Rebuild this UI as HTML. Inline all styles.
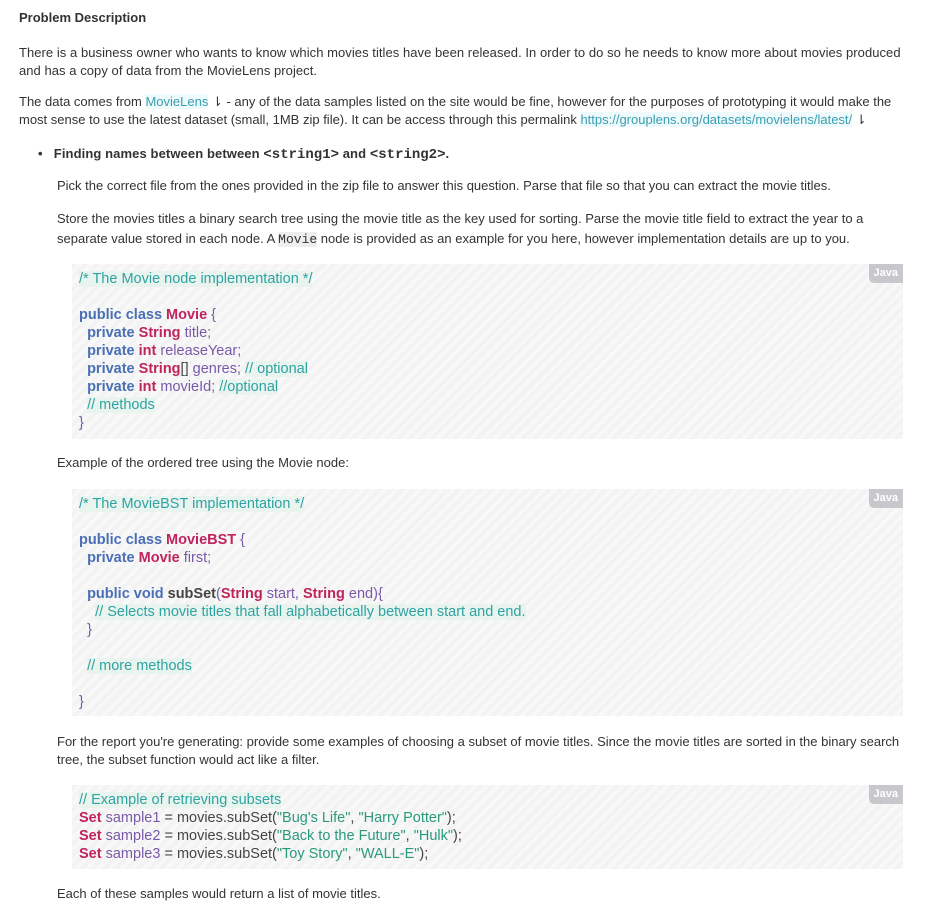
<!DOCTYPE html>
<html><head><meta charset="utf-8"><style>
body{margin:0;background:#fff;width:949px;height:912px;position:relative;font-family:"Liberation Sans",Arial,sans-serif;font-size:13px;letter-spacing:0.1px;color:#333;overflow:hidden}
.a{position:absolute;white-space:nowrap}
.p{position:absolute;left:19px;width:898px;line-height:18px}
a{color:#3a9fb0;text-decoration:none;background:#eefafc}
.code{position:absolute;left:72px;width:824px;padding:6px 0 6px 7px;background:repeating-linear-gradient(135deg,#f3f3f3 0 4px,#f8f8f8 4px 8px);font-family:"Liberation Sans",sans-serif;font-size:14.5px;letter-spacing:0;line-height:18px;white-space:pre;color:#444}
.tag{position:absolute;right:0;top:0;background:#c8c8cc;color:#fff;font-weight:bold;font-size:11px;padding:2px 5px 3px;border-radius:0 0 0 5px;line-height:14px}
.k{color:#4a6fb5;font-weight:bold}.t{color:#c0245c;font-weight:bold}.v{color:#7a5aa8}.c{color:#2ea3a3;background:#eaf4ee}.s{color:#2a9a7a}
.mono{font-family:"Liberation Mono",monospace;font-size:13px;letter-spacing:0}
</style></head><body>
<div class="a" style="left:19px;top:10px;font-weight:bold;font-size:13px;letter-spacing:0">Problem Description</div>
<div class="p" style="top:44px;letter-spacing:0.05px">There is a business owner who wants to know which movies titles have been released. In order to do so he needs to know more about movies produced and has a copy of data from the MovieLens project.</div>
<div class="p" style="top:93px;letter-spacing:0">The data comes from <a>MovieLens</a> ⇂ - any of the data samples listed on the site would be fine, however for the purposes of prototyping it would make the most sense to use the latest dataset (small, 1MB zip file). It can be access through this permalink <a>https://grouplens.org/datasets/movielens/latest/</a> ⇂</div>
<div class="a" style="left:38px;top:146px;font-weight:bold;font-size:13px">•&nbsp;&nbsp; Finding names between between <span class="mono" style="font-size:14px">&lt;string1&gt;</span> and <span class="mono" style="font-size:14px">&lt;string2&gt;</span>.</div>
<div class="a" style="left:57px;top:178px;letter-spacing:0">Pick the correct file from the ones provided in the zip file to answer this question. Parse that file so that you can extract the movie titles.</div>
<div class="p" style="left:57px;width:855px;top:209px;line-height:20px;letter-spacing:0">Store the movies titles a binary search tree using the movie title as the key used for sorting. Parse the movie title field to extract the year to a separate value stored in each node. A <span class="mono" style="background:#eee">Movie</span> node is provided as an example for you here, however implementation details are up to you.</div>
<div class="code" style="top:264px;height:163px"><div class="tag">Java</div><span class="c">/* The Movie node implementation */</span>

<span class="k">public class</span> <span class="t">Movie</span> <span class="v">{</span>
  <span class="k">private</span> <span class="t">String</span> <span class="v">title;</span>
  <span class="k">private</span> <span class="t">int</span> <span class="v">releaseYear;</span>
  <span class="k">private</span> <span class="t">String</span>[] <span class="v">genres;</span> <span class="c">// optional</span>
  <span class="k">private</span> <span class="t">int</span> <span class="v">movieId;</span> <span class="c">//optional</span>
  <span class="c">// methods</span>
<span class="v">}</span></div>
<div class="a" style="left:57px;top:455px;letter-spacing:0">Example of the ordered tree using the Movie node:</div>
<div class="code" style="top:489px;height:215px"><div class="tag">Java</div><span class="c">/* The MovieBST implementation */</span>

<span class="k">public class</span> <span class="t">MovieBST</span> <span class="v">{</span>
  <span class="k">private</span> <span class="t">Movie</span> <span class="v">first;</span>

  <span class="k">public void</span> <span class="k" style="color:#444">subSet</span><span class="v">(</span><span class="t">String</span> <span class="v">start,</span> <span class="t">String</span> <span class="v">end){</span>
    <span class="c">// Selects movie titles that fall alphabetically between start and end.</span>
  <span class="v">}</span>

  <span class="c">// more methods</span>

<span class="v">}</span></div>
<div class="p" style="left:57px;width:860px;top:733px;letter-spacing:0">For the report you're generating: provide some examples of choosing a subset of movie titles. Since the movie titles are sorted in the binary search tree, the subset function would act like a filter.</div>
<div class="code" style="top:785px;height:72px"><div class="tag">Java</div><span class="c">// Example of retrieving subsets</span>
<span class="t">Set</span> <span class="v">sample1</span> = movies.subSet(<span class="s">"Bug's Life"</span>, <span class="s">"Harry Potter"</span>);
<span class="t">Set</span> <span class="v">sample2</span> = movies.subSet(<span class="s">"Back to the Future"</span>, <span class="s">"Hulk"</span>);
<span class="t">Set</span> <span class="v">sample3</span> = movies.subSet(<span class="s">"Toy Story"</span>, <span class="s">"WALL-E"</span>);</div>
<div class="a" style="left:57px;top:886px;letter-spacing:0">Each of these samples would return a list of movie titles.</div>
</body></html>
